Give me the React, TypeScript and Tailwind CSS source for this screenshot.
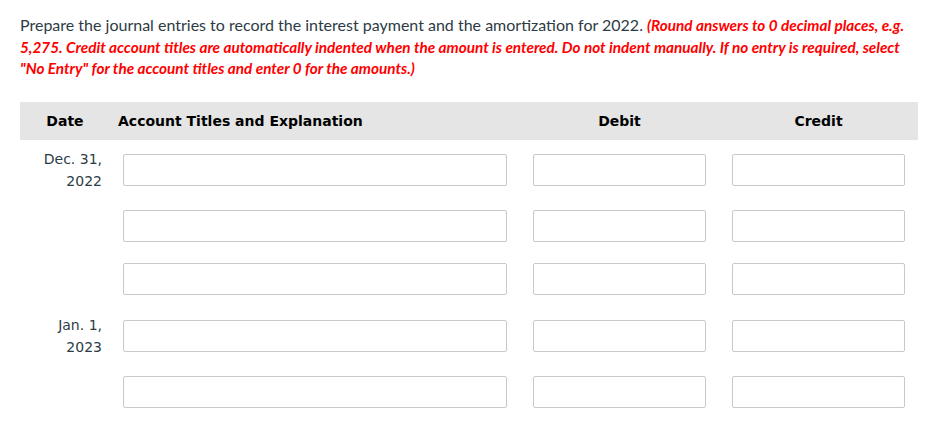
import React from "react";

const rows = [
  { date: ["Dec. 31,", "2022"], h: "h-[60px]" },
  { date: null, h: "h-[52px]" },
  { date: null, h: "h-[54px]" },
  { date: ["Jan. 1,", "2023"], h: "h-[60px]" },
  { date: null, h: "h-[52px]" },
];

function Box() {
  return <div className="h-[32px] w-full rounded-[2px] border border-[#c9c9c9] bg-white" />;
}

export default function App() {
  return (
    <div className="min-h-[448px] w-[931px] bg-white px-[20px] pt-[14px]">
      <p
        className="w-[898px] text-[16px] leading-[21.5px] text-[#2d3b45]"
        style={{ fontFamily: "Lato, 'Liberation Sans', sans-serif" }}
      >
        Prepare the journal entries to record the interest payment and the amortization for 2022.{" "}
        <span className="text-[15.3px] leading-[20px] font-bold italic text-[#ff0000]">
          (Round answers to 0 decimal places, e.g. 5,275. Credit account titles are automatically indented when the
          amount is entered. Do not indent manually. If no entry is required, select "No Entry" for the account titles
          and enter 0 for the amounts.)
        </span>
      </p>

      <div
        className="mt-[23.5px] w-[898px]"
        style={{ fontFamily: "'DejaVu Sans', Verdana, sans-serif" }}
      >
        <div className="grid h-[38px] grid-cols-[90px_410px_199px_199px] items-center bg-[#e5e5e5] text-[14px] font-bold text-black">
          <div className="text-center">Date</div>
          <div className="pl-[8px]">Account Titles and Explanation</div>
          <div className="text-center">Debit</div>
          <div className="text-center">Credit</div>
        </div>

        {rows.map((r, i) => (
          <div key={i} className={`grid ${r.h} grid-cols-[90px_410px_199px_199px] items-center`}>
            <div className="pr-[8px] text-right text-[14px] leading-[22px] text-[#2d3b45]">
              {r.date && (
                <>
                  <div>{r.date[0]}</div>
                  <div>{r.date[1]}</div>
                </>
              )}
            </div>
            <div className="px-[13px]">
              <Box />
            </div>
            <div className="px-[13px]">
              <Box />
            </div>
            <div className="px-[13px]">
              <Box />
            </div>
          </div>
        ))}
      </div>
    </div>
  );
}
